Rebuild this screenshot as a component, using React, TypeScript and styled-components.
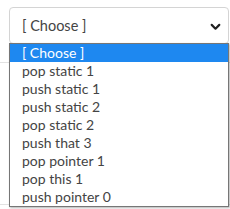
import { createGlobalStyle } from "styled-components";
import styled from "styled-components";

const options = [
  "[ Choose ]",
  "pop static 1",
  "push static 1",
  "push static 2",
  "pop static 2",
  "push that 3",
  "pop pointer 1",
  "pop this 1",
  "push pointer 0",
];

//styles
const GlobalStyle = createGlobalStyle`
  body {
    margin: 0;
    background: #fff;
    font-family: Lato, "Open Sans", sans-serif;
  }
`;
const Page = styled.div`
  width: 230px;
  height: 209px;
  overflow: hidden;
`;
const Section = styled.div<{ height: number }>`
  height: ${(p) => p.height}px;
  border-bottom: 1px solid #e2e2e2;
  box-sizing: border-box;
`;
const Header = styled(Section)`
  padding: 7px 1px 0 9px;
`;
const Field = styled.div`
  position: relative;
`;
const SelectBox = styled.div`
  height: 37px;
  box-sizing: border-box;
  border: 1px solid #d4d4d4;
  border-radius: 4px;
  background: #fff;
  display: flex;
  align-items: center;
  justify-content: space-between;
  padding: 0 6px 0 12px;
  font-size: 14.5px;
  color: #444;
`;
const Chevron = styled.svg`
  width: 13px;
  height: 13px;
  margin-top: 2px;
`;
const Dropdown = styled.ul`
  position: absolute;
  top: 36px;
  left: 0;
  right: 0;
  margin: 0;
  padding: 0;
  list-style: none;
  background: #fff;
  border: 1px solid #767676;
  box-shadow: 1px 1px 2px rgba(0, 0, 0, 0.3);
`;
const Option = styled.li<{ selected?: boolean }>`
  height: 18px;
  line-height: 18px;
  padding-left: 12px;
  font-size: 14px;
  color: ${(p) => (p.selected ? "#fff" : "#444")};
  background: ${(p) => (p.selected ? "#1e88f0" : "transparent")};
`;

export default function App() {
  return (
    <Page>
      <GlobalStyle />
      <Header height={63}>
        <Field>
          <SelectBox>
            <span>[ Choose ]</span>
            <Chevron viewBox="0 0 24 24" fill="none" stroke="#222" strokeWidth={4} strokeLinecap="round" strokeLinejoin="round">
              <path d="M5 9l7 7 7-7" />
            </Chevron>
          </SelectBox>
          <Dropdown>
            {options.map((o, i) => (
              <Option key={o} selected={i === 0}>
                {o}
              </Option>
            ))}
          </Dropdown>
        </Field>
      </Header>
      <Section height={142} />
    </Page>
  );
}
